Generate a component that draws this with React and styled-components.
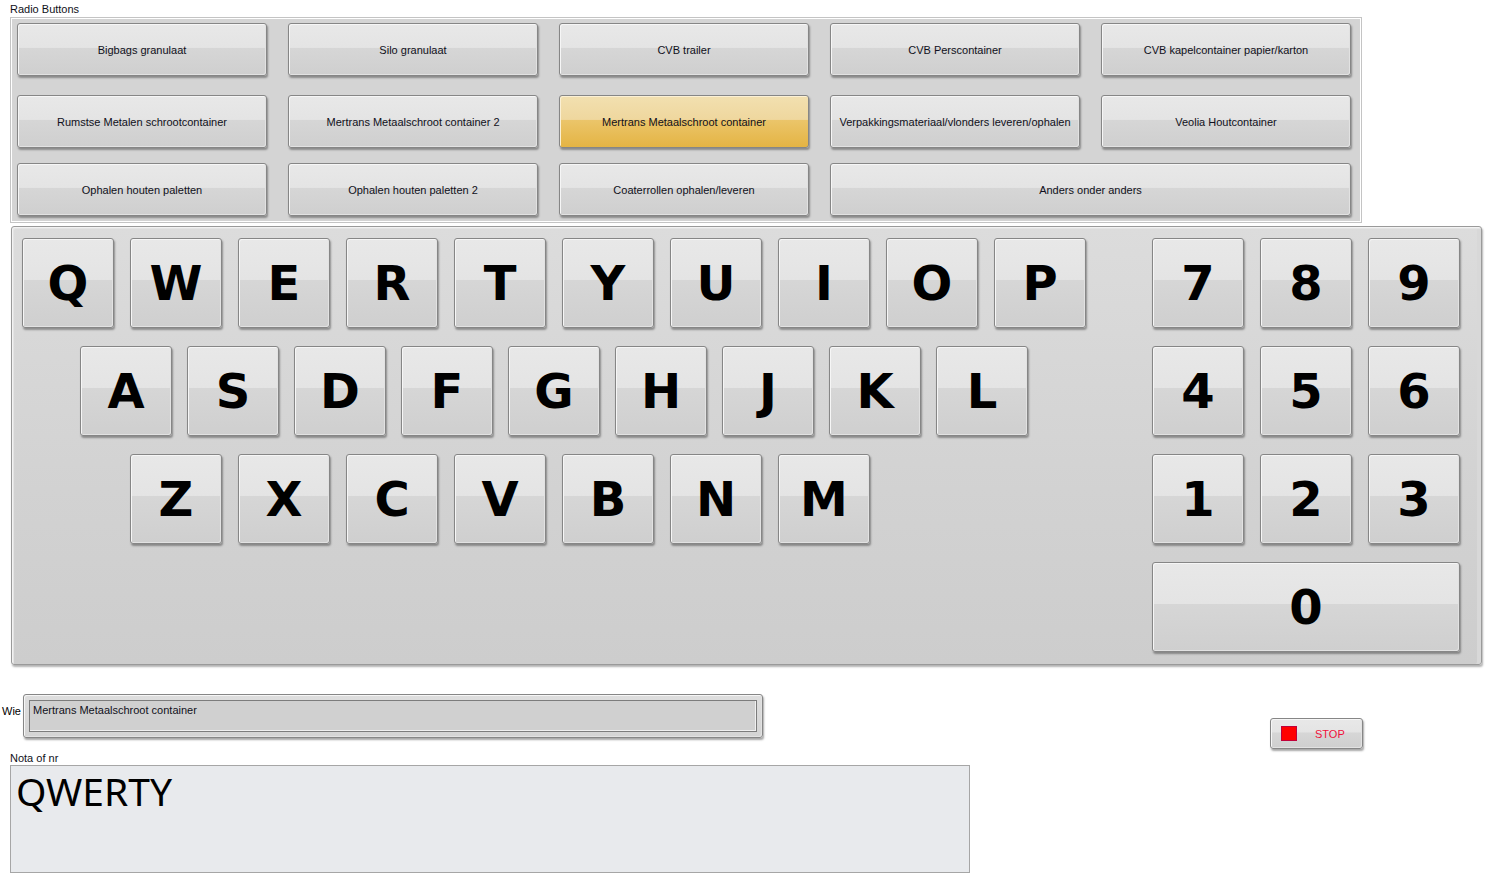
import React, { useState } from 'react'
import styled, { createGlobalStyle, css } from 'styled-components'

const GlobalStyle = createGlobalStyle`
  body {
    margin: 0;
    background: #ffffff;
    font-family: 'Liberation Sans', Arial, sans-serif;
    color: #000;
  }
`

const Panel = styled.div`
  width: 1486px;
  height: 873px;
  overflow: hidden;
`

const Caption = styled.div`
  font-size: 11px;
  line-height: 14px;
  height: ${(p) => p.$h || 14}px;
  padding-left: ${(p) => p.$left || 10}px;
  padding-top: ${(p) => p.$top || 0}px;
  color: #101018;
`

// raised LabVIEW style button face
const face = css`
  box-sizing: border-box;
  border: 1px solid #868686;
  border-radius: 3px;
  background: linear-gradient(
    to bottom,
    #e8e8e8 0%,
    #e4e4e4 46%,
    #d6d6d6 47%,
    #cfcfcf 100%
  );
  box-shadow: inset 1px 1px 0 #f6f6f6, inset -1px -1px 0 #e2e2e2, 1px 2px 2px rgba(0, 0, 0, 0.35);
`

const RadioBox = styled.div`
  box-sizing: border-box;
  margin: 1px 0 0 10px;
  width: 1352px;
  height: 206px;
  border: 1px solid #c4c4c4;
  box-shadow: inset 1px 1px 0 #ffffff, inset -1px -1px 0 #ffffff;
  background: #d4d4d4;
  padding: 5px 0 0 6px;
  display: grid;
  grid-template-columns: repeat(5, 250px);
  grid-template-rows: 53px 19px 53px 15px 53px;
  column-gap: 21px;
`

const RadioButton = styled.div`
  ${face}
  grid-row: ${(p) => p.$row * 2 - 1};
  grid-column: ${(p) => p.$span || 'auto'};
  display: flex;
  align-items: center;
  justify-content: center;
  font-size: 11px;
  color: #101020;
  cursor: pointer;
  ${(p) =>
    p.$on &&
    css`
      background: linear-gradient(
        to bottom,
        #f2e0b0 0%,
        #efd79e 46%,
        #ebc56a 47%,
        #e4b444 100%
      );
      box-shadow: inset 1px 1px 0 #fbf0d4, 1px 2px 2px rgba(0, 0, 0, 0.35);
    `}
`

const KeyPanel = styled.div`
  box-sizing: border-box;
  margin: 3px 0 0 11px;
  width: 1471px;
  height: 439px;
  border: 1px solid #9a9a9a;
  border-radius: 3px;
  background: linear-gradient(to bottom, #dcdcdc 0%, #d2d2d2 60%, #cdcdcd 100%);
  box-shadow: inset 1px 1px 0 #f2f2f2, inset 2px 2px 0 #e4e4e4, inset -4px 0 0 #d8d8d8, 1px 2px 2px rgba(0, 0, 0, 0.3);
  padding: 11px 0 0 10px;
  display: flex;
`

const Letters = styled.div`
  display: flex;
  flex-direction: column;
  gap: 18px;
`

const KeyRow = styled.div`
  display: flex;
  gap: ${(p) => p.$gap}px;
  padding-left: ${(p) => p.$indent}px;
`

const Key = styled.div`
  ${face}
  width: ${(p) => p.$w || 92}px;
  height: 90px;
  display: flex;
  align-items: center;
  justify-content: center;
  font-family: 'DejaVu Sans', Verdana, sans-serif;
  font-weight: bold;
  font-size: 48px;
  color: #000;
  cursor: pointer;
  grid-column: ${(p) => p.$span || 'auto'};
`

const NumPad = styled.div`
  margin-left: 66px;
  display: grid;
  grid-template-columns: repeat(3, 92px);
  grid-auto-rows: 90px;
  column-gap: 16px;
  row-gap: 18px;
`

const BottomRow = styled.div`
  display: flex;
  align-items: flex-start;
  margin-top: 29px;
`

const WieLabel = styled.div`
  font-size: 11px;
  line-height: 14px;
  padding: 10px 0 0 2px;
  width: 21px;
`

const WieFrame = styled.div`
  ${face}
  width: 740px;
  height: 44px;
  padding: 5px;
  background: linear-gradient(to bottom, #dedede, #d4d4d4);
`

const WieField = styled.div`
  box-sizing: border-box;
  height: 100%;
  border: 1px solid #7c7c7c;
  box-shadow: inset -1px -1px 0 #f0f0f0;
  background: #d0d0d0;
  font-size: 11px;
  line-height: 14px;
  padding: 2px 0 0 3px;
  color: #101020;
`

const StopButton = styled.div`
  ${face}
  margin: 24px 0 0 507px;
  width: 93px;
  height: 31px;
  display: flex;
  align-items: center;
  padding-left: 10px;
  gap: 18px;
  font-size: 11px;
  color: #f0103a;
  cursor: pointer;
`

const StopLamp = styled.span`
  box-sizing: border-box;
  width: 16px;
  height: 15px;
  background: #ff0000;
  border: 1px solid #c0003a;
`

const NoteBox = styled.div`
  box-sizing: border-box;
  margin-left: 10px;
  width: 960px;
  height: 108px;
  border: 1px solid #a6a6a6;
  background: #e8eaed;
  padding: 0 0 0 5px;
  font-family: 'Noto Sans', 'Open Sans', sans-serif;
  font-size: 39px;
  line-height: 50px;
  color: #000;
`

const choices = [
  ['Bigbags granulaat', 'Silo granulaat', 'CVB trailer', 'CVB Perscontainer', 'CVB kapelcontainer papier/karton'],
  [
    'Rumstse Metalen schrootcontainer',
    'Mertrans Metaalschroot container 2',
    'Mertrans Metaalschroot container',
    'Verpakkingsmateriaal/vlonders leveren/ophalen',
    'Veolia Houtcontainer',
  ],
  ['Ophalen houten paletten', 'Ophalen houten paletten 2', 'Coaterrollen ophalen/leveren', 'Anders onder anders'],
]

const rows = [
  { keys: 'QWERTYUIOP', indent: 0, gap: 16 },
  { keys: 'ASDFGHJKL', indent: 58, gap: 15 },
  { keys: 'ZXCVBNM', indent: 108, gap: 16 },
]

export default function App() {
  const [picked, setPicked] = useState('Mertrans Metaalschroot container')
  const [note, setNote] = useState('QWERTY')

  const press = (k) => setNote((n) => n + k)

  return (
    <>
      <GlobalStyle />
      <Panel>
        <Caption $top={2} $h={14}>Radio Buttons</Caption>
        <RadioBox>
          {choices.map((line, r) =>
            line.map((c) => (
              <RadioButton
                key={c}
                $row={r + 1}
                $on={picked === c}
                $span={c === 'Anders onder anders' ? 'span 2' : null}
                onClick={() => setPicked(c)}
              >
                {c}
              </RadioButton>
            ))
          )}
        </RadioBox>

        <KeyPanel>
          <Letters>
            {rows.map((r) => (
              <KeyRow key={r.keys} $indent={r.indent} $gap={r.gap}>
                {r.keys.split('').map((k) => (
                  <Key key={k} onClick={() => press(k)}>
                    {k}
                  </Key>
                ))}
              </KeyRow>
            ))}
          </Letters>
          <NumPad>
            {'789456123'.split('').map((k) => (
              <Key key={k} onClick={() => press(k)}>
                {k}
              </Key>
            ))}
            <Key $w={308} $span="span 3" onClick={() => press('0')}>
              0
            </Key>
          </NumPad>
        </KeyPanel>

        <BottomRow>
          <WieLabel>Wie</WieLabel>
          <WieFrame>
            <WieField>{picked}</WieField>
          </WieFrame>
          <StopButton>
            <StopLamp />
            STOP
          </StopButton>
        </BottomRow>

        <Caption $top={2} $h={14}>Nota of nr</Caption>
        <NoteBox>{note}</NoteBox>
      </Panel>
    </>
  )
}
